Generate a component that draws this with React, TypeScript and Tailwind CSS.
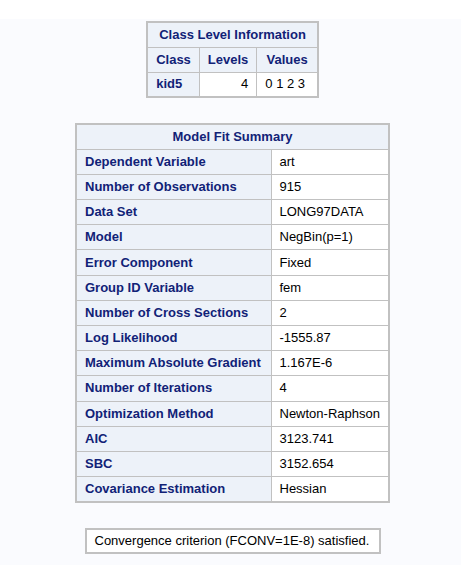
import React from 'react'

const classRows = [{ name: 'kid5', levels: '4', values: '0 1 2 3' }]

const fitRows: [string, string][] = [
  ['Dependent Variable', 'art'],
  ['Number of Observations', '915'],
  ['Data Set', 'LONG97DATA'],
  ['Model', 'NegBin(p=1)'],
  ['Error Component', 'Fixed'],
  ['Group ID Variable', 'fem'],
  ['Number of Cross Sections', '2'],
  ['Log Likelihood', '-1555.87'],
  ['Maximum Absolute Gradient', '1.167E-6'],
  ['Number of Iterations', '4'],
  ['Optimization Method', 'Newton-Raphson'],
  ['AIC', '3123.741'],
  ['SBC', '3152.654'],
  ['Covariance Estimation', 'Hessian'],
]

const hdr = 'border border-[#c1c1c1] bg-[#edf2f9] text-[#112277] font-bold px-[8px] py-0'
const data = 'border border-[#c1c1c1] bg-white text-black px-[8px] py-0'

export default function App() {
  return (
    <div className="min-h-screen bg-[#fafbfe] text-[13px] leading-[16px] font-['Liberation_Sans',Arial,sans-serif]">
      <div className="h-[19px] bg-white" />
      <div className="flex flex-col items-center pt-[2px] pl-[4px]">
        <table className="border-collapse border-2 border-[#c1c1c1]">
          <thead>
            <tr>
              <th colSpan={3} className={`${hdr} h-[25px] text-center`}>
                Class Level Information
              </th>
            </tr>
            <tr>
              <th className={`${hdr} h-[25px] w-[51px] text-center`}>Class</th>
              <th className={`${hdr} h-[25px] w-[57px] text-center`}>Levels</th>
              <th className={`${hdr} h-[25px] w-[61px] text-center`}>Values</th>
            </tr>
          </thead>
          <tbody>
            {classRows.map(r => (
              <tr key={r.name}>
                <th className={`${hdr} h-[25px] text-left`}>{r.name}</th>
                <td className={`${data} h-[25px] text-right`}>{r.levels}</td>
                <td className={`${data} h-[25px] text-left`}>{r.values}</td>
              </tr>
            ))}
          </tbody>
        </table>

        <table className="mt-[25px] border-collapse border-2 border-[#c1c1c1]">
          <thead>
            <tr>
              <th colSpan={2} className={`${hdr} h-[25.2px] text-center`}>
                Model Fit Summary
              </th>
            </tr>
          </thead>
          <tbody>
            {fitRows.map(([label, value]) => (
              <tr key={label}>
                <th className={`${hdr} h-[25.2px] w-[195px] text-left`}>{label}</th>
                <td className={`${data} h-[25.2px] w-[118px] text-left`}>{value}</td>
              </tr>
            ))}
          </tbody>
        </table>

        <div className="mt-[25px] w-[296px] h-[26px] border-2 border-[#c1c1c1] bg-white px-[8px] flex items-center text-black">
          Convergence criterion (FCONV=1E-8) satisfied.
        </div>
      </div>
    </div>
  )
}
